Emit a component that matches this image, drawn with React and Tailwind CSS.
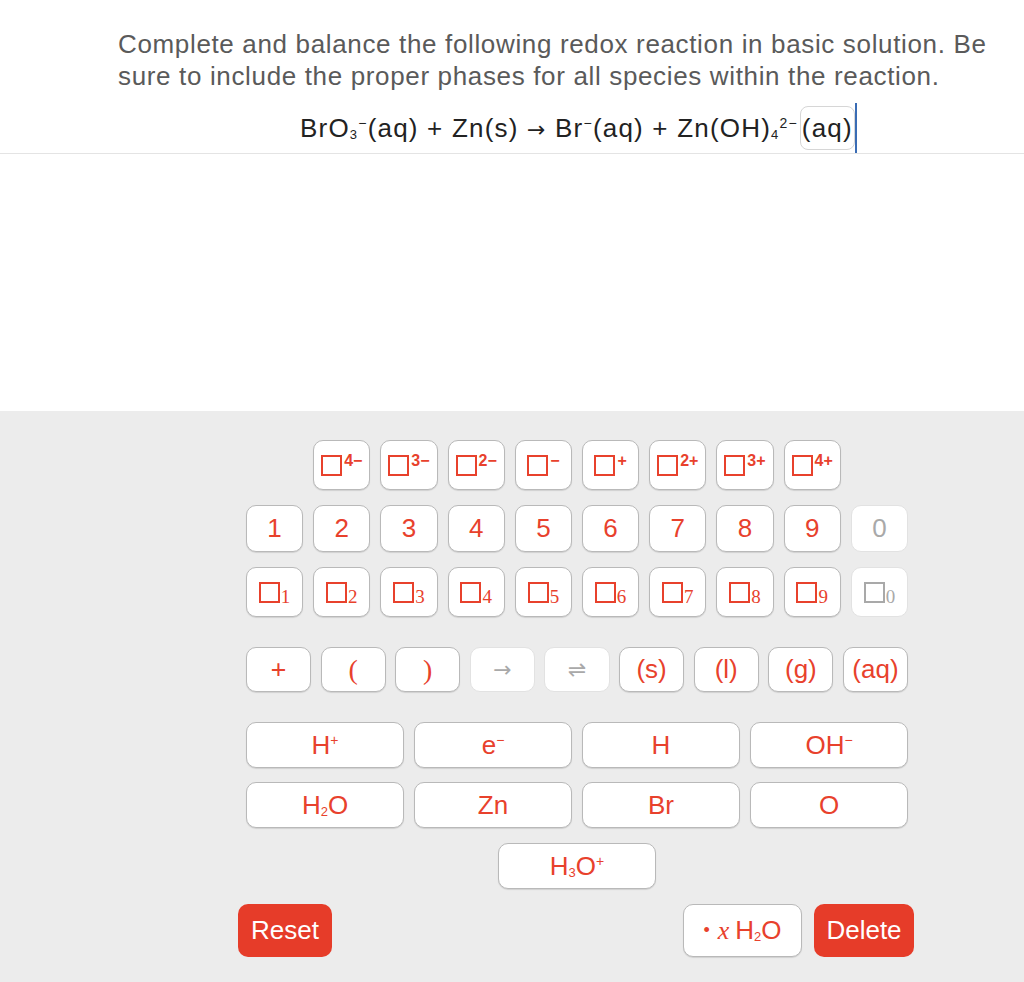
import React from 'react';

const RED = 'text-[#e8412c]';

const Key = ({ children, className = '', disabled = false }) => (
  <button
    className={`flex items-center justify-center rounded-[10px] bg-white ${
      disabled
        ? 'border border-[#e2e2e2] text-[#a9a9a9]'
        : `border border-[#b9b9b9] shadow-[0_1px_1px_rgba(0,0,0,0.12)] ${RED}`
    } ${className}`}
  >
    <span>{children}</span>
  </button>
);

const Box = ({ disabled }) => (
  <span
    className={`inline-block w-[21px] h-[21px] border-2 ${
      disabled ? 'border-[#a9a9a9]' : 'border-[#e8412c]'
    }`}
  />
);

const ChargeKey = ({ sup }) => (
  <Key className="h-[50px]">
    <span className="flex items-start">
      <Box />
      <span className="ml-[2px] -mt-[2px] text-[16px] font-semibold leading-none">{sup}</span>
    </span>
  </Key>
);

const SubKey = ({ sub, disabled }) => (
  <Key className="h-[50px]" disabled={disabled}>
    <span className="flex items-end">
      <Box disabled={disabled} />
      <span className="ml-[1px] -mb-[3px] font-['Liberation_Serif',serif] text-[19px] leading-none">{sub}</span>
    </span>
  </Key>
);

const Sub = ({ children }) => (
  <span className="text-[13px] align-[-2px] leading-none">{children}</span>
);
const Sup = ({ children }) => (
  <span className="text-[14px] align-[9px] leading-none">{children}</span>
);

export default function App() {
  const charges = ['4−', '3−', '2−', '−', '+', '2+', '3+', '4+'];
  const digits = ['1', '2', '3', '4', '5', '6', '7', '8', '9'];

  return (
    <div className="min-h-[982px] flex flex-col bg-white font-['Liberation_Sans',Arial,sans-serif]">
      <div className="pl-[118px] pr-[20px] pt-[28px]">
        <p className="text-[26px] tracking-[0.65px] leading-[32px] text-[#5a5a5a]">
          Complete and balance the following redox reaction in basic solution. Be
          <br />
          sure to include the proper phases for all species within the reaction.
        </p>
        <div className="mt-[11px] pl-[182px] flex items-center h-[50px] text-[26px] tracking-[1.2px] text-[#222]">
          <span>
            BrO<Sub>3</Sub>
            <Sup>−</Sup>(aq) + Zn(s) <span className="font-['DejaVu_Sans',sans-serif] text-[22px]">→</span> Br<Sup>−</Sup>(aq) + Zn(OH)<Sub>4</Sub>
            <Sup>2−</Sup>
          </span>
          <span className="ml-[2px] px-[1px] rounded-[8px] border border-[#d6d6d6] h-[44px] flex items-center">(aq)</span>
          <span className="w-[2px] h-[50px] bg-[#3a6cb4]" />
        </div>
      </div>
      <div className="h-px bg-[#e4e4e4]" />
      <div className="h-[257px]" />

      <div className="flex-1 bg-[#ececec] pt-[29px] pb-[25px]">
        <div className="w-[662px] ml-[246px] flex flex-col text-[26px]">
          <div className="grid grid-cols-10 gap-[10px]">
            <div />
            {charges.map((c) => (
              <ChargeKey key={c} sup={c} />
            ))}
          </div>

          <div className="mt-[15px] grid grid-cols-10 gap-[10px]">
            {digits.map((d) => (
              <Key key={d} className="h-[47px]">{d}</Key>
            ))}
            <Key className="h-[47px]" disabled>0</Key>
          </div>

          <div className="mt-[15px] grid grid-cols-10 gap-[10px]">
            {digits.map((d) => (
              <SubKey key={d} sub={d} />
            ))}
            <SubKey sub="0" disabled />
          </div>

          <div className="mt-[30px] grid grid-cols-9 gap-[9.6px]">
            <Key className="h-[45px] font-['Liberation_Serif',serif] font-bold text-[28px]">+</Key>
            <Key className="h-[45px] font-['Liberation_Serif',serif] text-[28px]">(</Key>
            <Key className="h-[45px] font-['Liberation_Serif',serif] text-[28px]">)</Key>
            <Key className="h-[45px] font-['DejaVu_Sans',sans-serif] text-[22px]" disabled>→</Key>
            <Key className="h-[45px] font-['DejaVu_Sans',sans-serif] text-[22px]" disabled>⇌</Key>
            <Key className="h-[45px]">(s)</Key>
            <Key className="h-[45px]">(l)</Key>
            <Key className="h-[45px]">(g)</Key>
            <Key className="h-[45px]">(aq)</Key>
          </div>

          <div className="mt-[30px] grid grid-cols-4 gap-[10px]">
            <Key className="h-[46px]">H<Sup>+</Sup></Key>
            <Key className="h-[46px]">e<Sup>−</Sup></Key>
            <Key className="h-[46px]">H</Key>
            <Key className="h-[46px]">OH<Sup>−</Sup></Key>
          </div>

          <div className="mt-[14px] grid grid-cols-4 gap-[10px]">
            <Key className="h-[46px]">H<Sub>2</Sub>O</Key>
            <Key className="h-[46px]">Zn</Key>
            <Key className="h-[46px]">Br</Key>
            <Key className="h-[46px]">O</Key>
          </div>

          <div className="mt-[15px] flex justify-center">
            <Key className="h-[46px] w-[158px]">H<Sub>3</Sub>O<Sup>+</Sup></Key>
          </div>
        </div>

        <div className="mt-[15px] w-[676px] ml-[238px] flex items-center justify-between text-[26px]">
          <button className="h-[53px] w-[94px] rounded-[10px] bg-[#e63c29] text-white">Reset</button>
          <div className="flex items-center gap-[12px]">
            <Key className="h-[53px] w-[119px]">
              <span className="text-[18px] mr-[8px] align-[3px]">•</span>
              <span className="font-['Liberation_Serif',serif] italic mr-[6px]">x</span>
              H<Sub>2</Sub>O
            </Key>
            <button className="h-[53px] w-[100px] rounded-[10px] bg-[#e63c29] text-white">Delete</button>
          </div>
        </div>
      </div>
    </div>
  );
}
